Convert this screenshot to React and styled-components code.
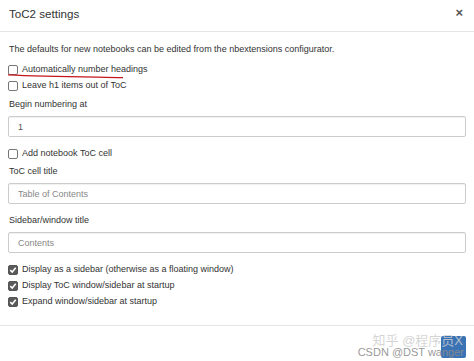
import React from 'react'
import styled, { createGlobalStyle } from 'styled-components'

const GlobalStyle = createGlobalStyle`
  html, body { margin: 0; padding: 0; background: #fff; }
  body {
    font-family: "Liberation Sans", Arial, sans-serif;
    color: #333;
    width: 474px;
    height: 361px;
    overflow: hidden;
  }
`

const Modal = styled.div`
  position: relative;
  width: 474px;
  height: 361px;
  display: flex;
  flex-direction: column;
`

const Header = styled.div`
  height: 32px;
  box-sizing: border-box;
  border-bottom: 1px solid #e5e5e5;
  display: flex;
  align-items: center;
  justify-content: space-between;
  padding: 0 9px;
`

const Title = styled.h4`
  margin: 0;
  font-size: 11.6px;
  font-weight: normal;
  color: #333;
  padding-bottom: 5px;
`

const Close = styled.span`
  font-size: 13px;
  font-weight: bold;
  color: #555;
  margin-top: -7px;
  margin-right: 2px;
`

const Body = styled.div`
  padding: 10px 8px 0 8px;
  display: flex;
  flex-direction: column;
  font-size: 9px;
  flex: 1;
`

const Note = styled.p`
  margin: 1px 0 6px 1px;
  height: 12px;
  line-height: 12px;
`

const CheckRow = styled.label`
  position: relative;
  display: flex;
  align-items: center;
  gap: 4px;
  height: 16px;
  margin-bottom: ${p => p.$mb || 0}px;
`

const Box = styled.span`
  width: 10px;
  height: 10px;
  flex: none;
  box-sizing: border-box;
  border-radius: 2px;
  border: 1px solid ${p => (p.$checked ? '#555' : '#767676')};
  background: ${p => (p.$checked ? '#5a5a5a' : '#fff')};
  display: inline-flex;
  align-items: center;
  justify-content: center;
  margin-top: 1px;
`

const Label = styled.div`
  margin: ${p => p.$mt || 0}px 0 5px 1px;
  height: 13px;
  line-height: 13px;
`

const Input = styled.div`
  height: 21px;
  box-sizing: border-box;
  border: 1px solid #ccc;
  border-radius: 2px;
  box-shadow: inset 0 1px 1px rgba(0,0,0,0.06);
  display: flex;
  align-items: center;
  padding-left: 9px;
  color: ${p => (p.$placeholder ? '#888' : '#555')};
  margin-bottom: ${p => p.$mb || 0}px;
  width: 458px;
`

const Underline = styled.svg`
  position: absolute;
  left: -2px;
  top: 13px;
  pointer-events: none;
`

const Footer = styled.div`
  height: 36px;
  box-sizing: border-box;
  border-top: 1px solid #e5e5e5;
  display: flex;
  justify-content: flex-end;
  align-items: flex-start;
  padding: 10px 8px 0 0;
  position: relative;
`

const OkButton = styled.div`
  width: 25px;
  height: 22px;
  background: #3a73b5;
  border-radius: 2px;
`

const Watermark = styled.div`
  position: absolute;
  right: ${p => p.$right}px;
  top: ${p => p.$top}px;
  font-size: ${p => p.$size}px;
  color: ${p => p.$color};
  font-family: "Liberation Sans", "Noto Sans CJK SC", sans-serif;
  white-space: nowrap;
  line-height: 1;
`

const Check = () => (
  <svg width="8" height="8" viewBox="0 0 8 8">
    <path d="M1.3 4.2 L3.2 6 L6.7 1.8" fill="none" stroke="#fff" strokeWidth="1.6" />
  </svg>
)

const CheckItem = ({ checked, children, mb, mark }) => (
  <CheckRow $mb={mb}>
    <Box $checked={checked}>{checked && <Check />}</Box>
    <span>{children}</span>
    {mark && (
      <Underline width="130" height="8" viewBox="0 0 130 8">
        <path d="M2 0.8 C 40 2.6, 90 3, 117 3.6" fill="none" stroke="#c4161c" strokeWidth="1.2" />
      </Underline>
    )}
  </CheckRow>
)

export default function App() {
  return (
    <>
      <GlobalStyle />
      <Modal>
        <Header>
          <Title>ToC2 settings</Title>
          <Close>×</Close>
        </Header>
        <Body>
          <Note>The defaults for new notebooks can be edited from the nbextensions configurator.</Note>
          <CheckItem mark>Automatically number headings</CheckItem>
          <CheckItem>Leave h1 items out of ToC</CheckItem>
          <Label $mt={5}>Begin numbering at</Label>
          <Input $mb={8}>1</Input>
          <CheckItem mb={4}>Add notebook ToC cell</CheckItem>
          <Label>ToC cell title</Label>
          <Input $placeholder $mb={10}>Table of Contents</Input>
          <Label>Sidebar/window title</Label>
          <Input $placeholder $mb={8}>Contents</Input>
          <CheckItem checked>Display as a sidebar (otherwise as a floating window)</CheckItem>
          <CheckItem checked>Display ToC window/sidebar at startup</CheckItem>
          <CheckItem checked>Expand window/sidebar at startup</CheckItem>
        </Body>
        <Footer>
          <OkButton />
          <Watermark $right={11} $top={8} $size={13} $color="rgba(205,205,205,0.85)">知乎 @程序员X</Watermark>
          <Watermark $right={10} $top={21} $size={11} $color="rgba(140,140,140,0.9)">CSDN @DST wanger</Watermark>
        </Footer>
      </Modal>
    </>
  )
}
